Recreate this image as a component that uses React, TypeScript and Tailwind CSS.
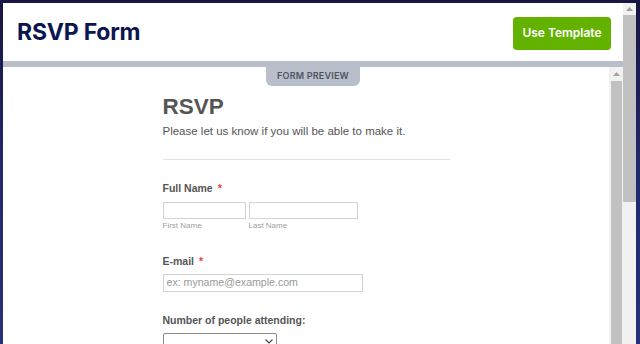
import React from "react";

const Up = ({ color = "#a3a3a3" }: { color?: string }) => (
  <svg width="7" height="4" viewBox="0 0 7 4">
    <polygon points="3.5,0 7,4 0,4" fill={color} />
  </svg>
);

const Label = ({ text, req }: { text: string; req?: boolean }) => (
  <div className="text-[10.5px] leading-[13px] font-bold text-[#555555]">
    {text}
    {req && <span className="ml-[5px] text-[#f23a3c]">*</span>}
  </div>
);

export default function App() {
  return (
    <div className="w-[640px] h-[344px] overflow-hidden flex pt-[3px] pl-[3px] bg-gradient-to-b from-[#171543] via-[#222a6c] to-[#27307a]">
      <div className="w-[620px] flex flex-col bg-white">
        {/* header */}
        <div className="h-[58px] shrink-0 flex items-center justify-between pl-[14px] pr-[12px]">
          <div className="font-['Inter',sans-serif] font-bold text-[23px] text-[#0a1551] tracking-[-0.2px]">
            RSVP Form
          </div>
          <div className="w-[98px] h-[33px] mt-[2px] rounded-[4px] bg-[#64b200] flex items-center justify-center font-['Inter',sans-serif] font-semibold text-[12px] text-white">
            Use Template
          </div>
        </div>
        {/* bar */}
        <div className="h-[6px] shrink-0 bg-[#b9bfca] relative">
          <div className="absolute top-0 left-1/2 -translate-x-1/2 w-[94px] h-[25px] rounded-b-[6px] bg-[#b9bfca] flex items-center justify-center pt-[4px] z-10">
            <span className="font-['Inter',sans-serif] font-semibold text-[9px] leading-[11px] tracking-[0.2px] text-[#4e5363]">
              FORM PREVIEW
            </span>
          </div>
        </div>
        {/* content */}
        <div className="flex-1 flex overflow-hidden">
          <div className="flex-1 font-['Liberation_Sans',Arial,sans-serif]">
            <div className="w-[287px] mx-auto pt-[29px]">
              <div className="text-[22.5px] leading-[22px] font-bold text-[#555555]">RSVP</div>
              <div className="mt-[6px] text-[11.5px] leading-[14px] text-[#555555]">
                Please let us know if you will be able to make it.
              </div>
              <div className="mt-[21px] border-t border-[#e3e3e3]" />
              <div className="mt-[22px]">
                <Label text="Full Name" req />
              </div>
              <div className="mt-[7px] flex gap-[3px]">
                <div className="flex flex-col">
                  <div className="w-[83px] h-[17px] border border-[#d4d4d4]" />
                  <div className="mt-[2px] text-[8px] leading-[10px] text-[#a0a0a0]">First Name</div>
                </div>
                <div className="flex flex-col">
                  <div className="w-[109px] h-[17px] border border-[#d4d4d4]" />
                  <div className="mt-[2px] text-[8px] leading-[10px] text-[#a0a0a0]">Last Name</div>
                </div>
              </div>
              <div className="mt-[24px]">
                <Label text="E-mail" req />
              </div>
              <div className="mt-[6px] w-[200px] h-[18px] border border-[#d4d4d4] flex items-center pl-[3px] text-[10.6px] text-[#999999]">
                ex: myname@example.com
              </div>
              <div className="mt-[22px]">
                <Label text="Number of people attending:" />
              </div>
              <div className="mt-[6px] w-[114px] h-[20px] border border-[#8a8a8a] rounded-[2px] flex justify-end items-start pr-[3px] pt-[5px]">
                <svg width="8" height="5" viewBox="0 0 8 5">
                  <polyline points="0.5,0.5 4,4 7.5,0.5" fill="none" stroke="#444" strokeWidth="1.1" />
                </svg>
              </div>
            </div>
          </div>
          {/* inner scrollbar */}
          <div className="w-[14px] shrink-0 flex flex-col bg-[#f1f1f1]">
            <div className="h-[14px] shrink-0 flex items-center justify-center pl-[1px]">
              <Up />
            </div>
            <div className="flex-1 ml-[2px] mr-[1px] bg-[#c1c1c1]" />
          </div>
        </div>
      </div>
      {/* outer scrollbar */}
      <div className="w-[13px] shrink-0 flex flex-col bg-[#f1f1f1]">
        <div className="h-[12px] shrink-0 flex items-center justify-center">
          <Up />
        </div>
        <div className="h-[187px] shrink-0 bg-[#c1c1c1]" />
      </div>
    </div>
  );
}
